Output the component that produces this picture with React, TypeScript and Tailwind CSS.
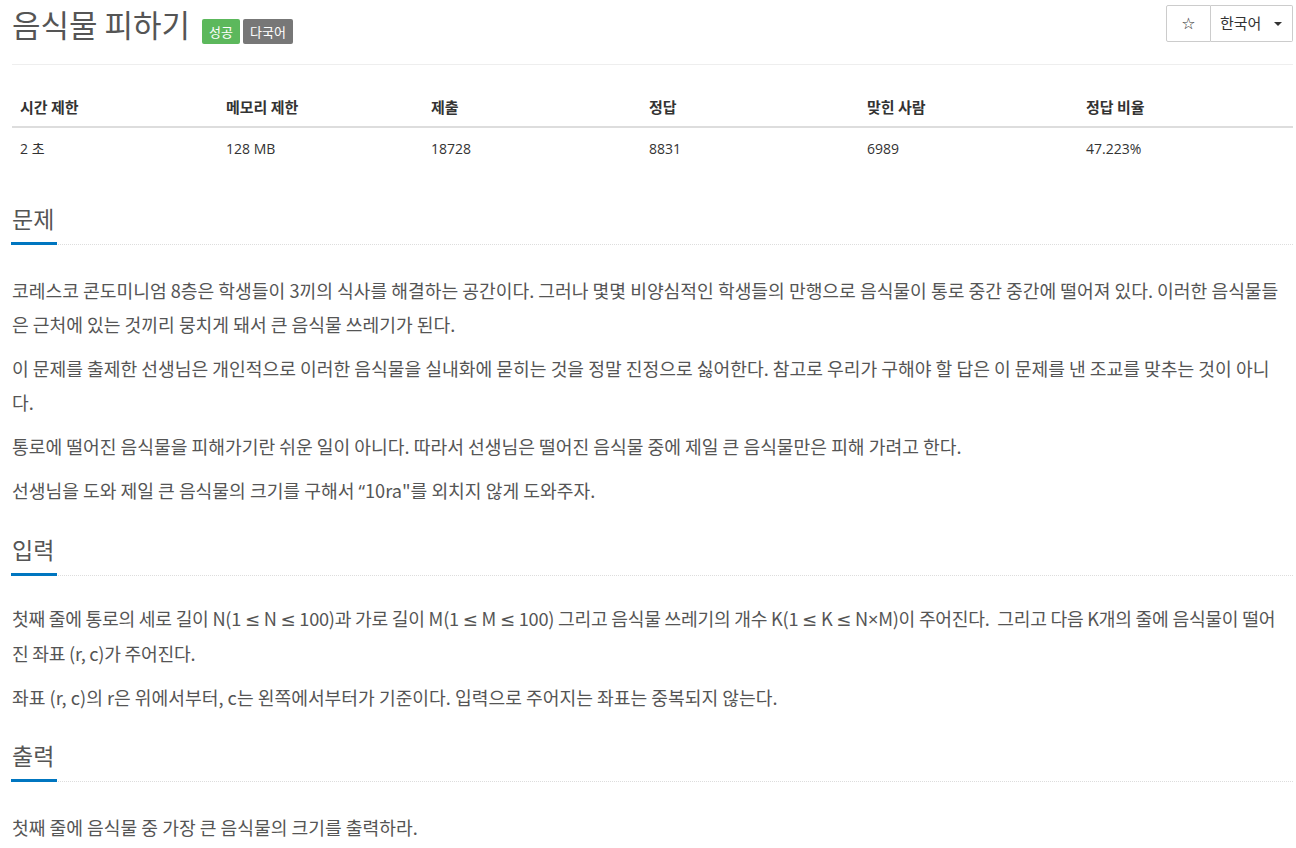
import React from 'react'

const kr = { fontFamily: '"Noto Sans CJK KR", sans-serif' }
const sym = { fontFamily: '"Noto Sans", "DejaVu Sans", sans-serif' }

const columns = [
  { label: '시간 제한', value: '2 초', width: 'w-[206px]' },
  { label: '메모리 제한', value: '128 MB', width: 'w-[205px]' },
  { label: '제출', value: '18728', width: 'w-[218px]' },
  { label: '정답', value: '8831', width: 'w-[218px]' },
  { label: '맞힌 사람', value: '6989', width: 'w-[219px]' },
  { label: '정답 비율', value: '47.223%', width: 'w-[215px]' },
]

const SectionTitle: React.FC<{ title: string; first?: boolean }> = ({ title, first }) => (
  <div className={`${first ? 'mt-[33px]' : 'mt-[16px]'} flex border-b border-dotted border-[#ddd]`}>
    <h2 className="-mb-px -ml-px border-b-[3px] border-[#0076c0] pr-[3px] pb-[9px] pl-px text-[23px] leading-[30px] font-normal text-[#555]">
      {title}
    </h2>
  </div>
)

// math symbols come out full width in the CJK font, so give them a latin one
const renderLine = (line: string) =>
  line.split(/([≤×“])/).map((part, i) =>
    /^[≤×“]$/.test(part) ? (
      <span key={i} style={sym}>
        {part}
      </span>
    ) : (
      part
    )
  )

const Para: React.FC<{ lines: string[]; tight?: boolean }> = ({ lines, tight }) => (
  <p
    className={`${
      tight ? 'tracking-[-0.25px]' : ''
    } mb-[10px] whitespace-nowrap text-[18.2px] leading-[34px] text-[#555]`}
  >
    {lines.map((line, i) => (
      <React.Fragment key={i}>
        {i > 0 && <br />}
        {renderLine(line)}
      </React.Fragment>
    ))}
  </p>
)

export default function App() {
  return (
    <div className="flex min-h-screen flex-col bg-white pl-[12px] pr-[3px]" style={kr}>
      {/* header */}
      <div className="flex items-start justify-between pt-[4px]">
        <div className="flex items-end">
          <h1 className="text-[31px] leading-[40px] font-normal text-[#555]">음식물 피하기</h1>
          <span className="ml-[12px] flex h-[25px] items-center rounded-[2px] bg-[#5cb85c] px-[7px] text-[13px] text-white">
            성공
          </span>
          <span className="ml-[3px] flex h-[25px] items-center rounded-[2px] bg-[#777] px-[7px] text-[13px] text-white">
            다국어
          </span>
        </div>
        <div className="mt-[1px] flex h-[37px] text-[#333]">
          <button
            className="flex w-[45px] items-center justify-center rounded-l-[2px] border border-[#ccc] bg-white text-[16px]"
            style={{ fontFamily: '"DejaVu Sans", sans-serif' }}
          >
            ☆
          </button>
          <button className="flex w-[82px] items-center justify-between rounded-r-[2px] border border-l-0 border-[#ccc] bg-white pr-[10px] pl-[9px] text-[15px]">
            <span>한국어</span>
            <span className="h-0 w-0 border-x-[4px] border-t-[4px] border-x-transparent border-t-[#333]" />
          </button>
        </div>
      </div>

      <div className="mt-[20px] border-b border-[#eee]" />

      {/* info table */}
      <table
        className="mt-[23px] w-full table-fixed border-collapse"
        style={{ fontFamily: '"Open Sans", "Noto Sans CJK KR", sans-serif' }}
      >
        <thead>
          <tr>
            {columns.map((c) => (
              <th
                key={c.label}
                className={`${c.width} border-b-2 border-[#ddd] px-[8px] pt-[8px] pb-[8px] text-left text-[15px] leading-[22px] font-bold text-[#333]`}
                style={kr}
              >
                {c.label}
              </th>
            ))}
          </tr>
        </thead>
        <tbody>
          <tr>
            {columns.map((c) => (
              <td key={c.label} className="px-[8px] py-[11px] text-[14px] leading-[20px] text-[#333]">
                {c.value}
              </td>
            ))}
          </tr>
        </tbody>
      </table>

      {/* 문제 */}
      <SectionTitle title="문제" first />
      <div className="mt-[28px]">
        <Para
          lines={[
            '코레스코 콘도미니엄 8층은 학생들이 3끼의 식사를 해결하는 공간이다. 그러나 몇몇 비양심적인 학생들의 만행으로 음식물이 통로 중간 중간에 떨어져 있다. 이러한 음식물들',
            '은 근처에 있는 것끼리 뭉치게 돼서 큰 음식물 쓰레기가 된다.',
          ]}
        />
        <Para
          lines={[
            '이 문제를 출제한 선생님은 개인적으로 이러한 음식물을 실내화에 묻히는 것을 정말 진정으로 싫어한다. 참고로 우리가 구해야 할 답은 이 문제를 낸 조교를 맞추는 것이 아니',
            '다.',
          ]}
        />
        <Para lines={['통로에 떨어진 음식물을 피해가기란 쉬운 일이 아니다. 따라서 선생님은 떨어진 음식물 중에 제일 큰 음식물만은 피해 가려고 한다.']} />
        <Para lines={['선생님을 도와 제일 큰 음식물의 크기를 구해서 “10ra"를 외치지 않게 도와주자.']} />
      </div>

      {/* 입력 */}
      <SectionTitle title="입력" />
      <div className="mt-[25px]">
        <Para
          tight
          lines={[
            '첫째 줄에 통로의 세로 길이 N(1 ≤ N ≤ 100)과 가로 길이 M(1 ≤ M ≤ 100) 그리고 음식물 쓰레기의 개수 K(1 ≤ K ≤ N×M)이 주어진다.\u00a0 그리고 다음 K개의 줄에 음식물이 떨어',
            '진 좌표 (r, c)가 주어진다.',
          ]}
        />
        <Para lines={['좌표 (r, c)의 r은 위에서부터, c는 왼쪽에서부터가 기준이다. 입력으로 주어지는 좌표는 중복되지 않는다.']} />
      </div>

      {/* 출력 */}
      <SectionTitle title="출력" />
      <div className="mt-[28px]">
        <Para lines={['첫째 줄에 음식물 중 가장 큰 음식물의 크기를 출력하라.']} />
      </div>
    </div>
  )
}
